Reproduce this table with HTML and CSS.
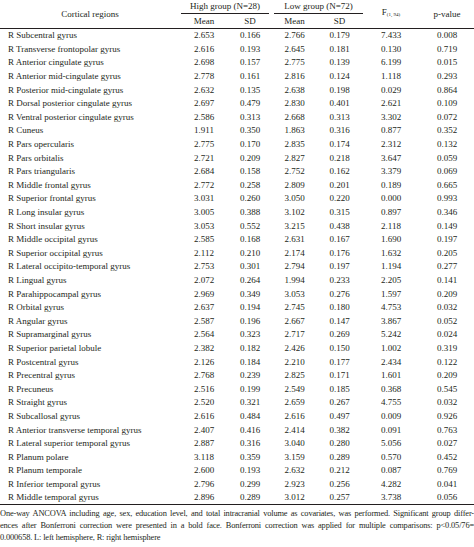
FILE: index.html
```html
<!DOCTYPE html>
<html>
<head>
<meta charset="utf-8">
<link rel="stylesheet" href="styles.css">
</head>
<body>
<div class="page">
<table class="stats">
<colgroup>
<col class="c-region"><col class="c-m1"><col class="c-s1"><col class="c-m2"><col class="c-s2"><col class="c-f"><col class="c-p">
</colgroup>
<thead>
<tr class="h1">
<th rowspan="2" class="region-h">Cortical regions</th>
<th colspan="2" class="grp"><span class="grp-label g1">High group (N=28)</span></th>
<th colspan="2" class="grp"><span class="grp-label g2">Low group (N=72)</span></th>
<th rowspan="2">F<sub>(1, 94)</sub></th>
<th rowspan="2">p-value</th>
</tr>
<tr class="h2">
<th>Mean</th><th>SD</th><th>Mean</th><th>SD</th>
</tr>
</thead>
<tbody>
<tr><td>R Subcentral gyrus</td><td>2.653</td><td>0.166</td><td>2.766</td><td>0.179</td><td>7.433</td><td>0.008</td></tr>
<tr><td>R Transverse frontopolar gyrus</td><td>2.616</td><td>0.193</td><td>2.645</td><td>0.181</td><td>0.130</td><td>0.719</td></tr>
<tr><td>R Anterior cingulate gyrus</td><td>2.698</td><td>0.157</td><td>2.775</td><td>0.139</td><td>6.199</td><td>0.015</td></tr>
<tr><td>R Anterior mid-cingulate gyrus</td><td>2.778</td><td>0.161</td><td>2.816</td><td>0.124</td><td>1.118</td><td>0.293</td></tr>
<tr><td>R Posterior mid-cingulate gyrus</td><td>2.632</td><td>0.135</td><td>2.638</td><td>0.198</td><td>0.029</td><td>0.864</td></tr>
<tr><td>R Dorsal posterior cingulate gyrus</td><td>2.697</td><td>0.479</td><td>2.830</td><td>0.401</td><td>2.621</td><td>0.109</td></tr>
<tr><td>R Ventral posterior cingulate gyrus</td><td>2.586</td><td>0.313</td><td>2.668</td><td>0.313</td><td>3.302</td><td>0.072</td></tr>
<tr><td>R Cuneus</td><td>1.911</td><td>0.350</td><td>1.863</td><td>0.316</td><td>0.877</td><td>0.352</td></tr>
<tr><td>R Pars opercularis</td><td>2.775</td><td>0.170</td><td>2.835</td><td>0.174</td><td>2.312</td><td>0.132</td></tr>
<tr><td>R Pars orbitalis</td><td>2.721</td><td>0.209</td><td>2.827</td><td>0.218</td><td>3.647</td><td>0.059</td></tr>
<tr><td>R Pars triangularis</td><td>2.684</td><td>0.158</td><td>2.752</td><td>0.162</td><td>3.379</td><td>0.069</td></tr>
<tr><td>R Middle frontal gyrus</td><td>2.772</td><td>0.258</td><td>2.809</td><td>0.201</td><td>0.189</td><td>0.665</td></tr>
<tr><td>R Superior frontal gyrus</td><td>3.031</td><td>0.260</td><td>3.050</td><td>0.220</td><td>0.000</td><td>0.993</td></tr>
<tr><td>R Long insular gyrus</td><td>3.005</td><td>0.388</td><td>3.102</td><td>0.315</td><td>0.897</td><td>0.346</td></tr>
<tr><td>R Short insular gyrus</td><td>3.053</td><td>0.552</td><td>3.215</td><td>0.438</td><td>2.118</td><td>0.149</td></tr>
<tr><td>R Middle occipital gyrus</td><td>2.585</td><td>0.168</td><td>2.631</td><td>0.167</td><td>1.690</td><td>0.197</td></tr>
<tr><td>R Superior occipital gyrus</td><td>2.112</td><td>0.210</td><td>2.174</td><td>0.176</td><td>1.632</td><td>0.205</td></tr>
<tr><td>R Lateral occipito-temporal gyrus</td><td>2.753</td><td>0.301</td><td>2.794</td><td>0.197</td><td>1.194</td><td>0.277</td></tr>
<tr><td>R Lingual gyrus</td><td>2.072</td><td>0.264</td><td>1.994</td><td>0.233</td><td>2.205</td><td>0.141</td></tr>
<tr><td>R Parahippocampal gyrus</td><td>2.969</td><td>0.349</td><td>3.053</td><td>0.276</td><td>1.597</td><td>0.209</td></tr>
<tr><td>R Orbital gyrus</td><td>2.637</td><td>0.194</td><td>2.745</td><td>0.180</td><td>4.753</td><td>0.032</td></tr>
<tr><td>R Angular gyrus</td><td>2.587</td><td>0.196</td><td>2.667</td><td>0.147</td><td>3.867</td><td>0.052</td></tr>
<tr><td>R Supramarginal gyrus</td><td>2.564</td><td>0.323</td><td>2.717</td><td>0.269</td><td>5.242</td><td>0.024</td></tr>
<tr><td>R Superior parietal lobule</td><td>2.382</td><td>0.182</td><td>2.426</td><td>0.150</td><td>1.002</td><td>0.319</td></tr>
<tr><td>R Postcentral gyrus</td><td>2.126</td><td>0.184</td><td>2.210</td><td>0.177</td><td>2.434</td><td>0.122</td></tr>
<tr><td>R Precentral gyrus</td><td>2.768</td><td>0.239</td><td>2.825</td><td>0.171</td><td>1.601</td><td>0.209</td></tr>
<tr><td>R Precuneus</td><td>2.516</td><td>0.199</td><td>2.549</td><td>0.185</td><td>0.368</td><td>0.545</td></tr>
<tr><td>R Straight gyrus</td><td>2.520</td><td>0.321</td><td>2.659</td><td>0.267</td><td>4.755</td><td>0.032</td></tr>
<tr><td>R Subcallosal gyrus</td><td>2.616</td><td>0.484</td><td>2.616</td><td>0.497</td><td>0.009</td><td>0.926</td></tr>
<tr><td>R Anterior transverse temporal gyrus</td><td>2.407</td><td>0.416</td><td>2.414</td><td>0.382</td><td>0.091</td><td>0.763</td></tr>
<tr><td>R Lateral superior temporal gyrus</td><td>2.887</td><td>0.316</td><td>3.040</td><td>0.280</td><td>5.056</td><td>0.027</td></tr>
<tr><td>R Planum polare</td><td>3.118</td><td>0.359</td><td>3.159</td><td>0.289</td><td>0.570</td><td>0.452</td></tr>
<tr><td>R Planum temporale</td><td>2.600</td><td>0.193</td><td>2.632</td><td>0.212</td><td>0.087</td><td>0.769</td></tr>
<tr><td>R Inferior temporal gyrus</td><td>2.796</td><td>0.299</td><td>2.923</td><td>0.256</td><td>4.282</td><td>0.041</td></tr>
<tr class="last"><td>R Middle temporal gyrus</td><td>2.896</td><td>0.289</td><td>3.012</td><td>0.257</td><td>3.738</td><td>0.056</td></tr>
</tbody>
</table>
<div class="note">
<p class="jl">One-way ANCOVA including age, sex, education level, and total intracranial volume as covariates, was performed. Significant group differ-</p>
<p class="jl">ences after Bonferroni correction were presented in a bold face. Bonferroni correction was applied for multiple comparisons: p&lt;0.05/76=</p>
<p>0.000658. L: left hemisphere, R: right hemisphere</p>
</div>
</div>
</body>
</html>
```

FILE: styles.css
```css
html, body {
  margin: 0;
  padding: 0;
  background: #ffffff;
}
.page {
  width: 474px;
  font-family: "Liberation Serif", "Times New Roman", serif;
  color: #231f20;
  font-size: 9px;
}
.stats {
  width: 474px;
  border-collapse: collapse;
  table-layout: fixed;
}
.c-region { width: 180px; }
.c-m1 { width: 48px; }
.c-s1 { width: 44px; }
.c-m2 { width: 45px; }
.c-s2 { width: 45px; }
.c-f { width: 58px; }
.c-p { width: 54px; }
.stats th {
  font-weight: normal;
  text-align: center;
  padding: 0;
  height: 13.5px;
  line-height: 12px;
  vertical-align: middle;
}
.stats thead tr.h2 th {
  border-bottom: 0.8px solid #231f20;
}
.stats thead th[rowspan] {
  border-bottom: 0.8px solid #231f20;
}
.grp {
  vertical-align: bottom;
}
.grp-label {
  display: block;
  border-bottom: 0.8px solid #231f20;
  padding-bottom: 1px;
}
.g1 { margin: 0 3px 0 1px; }
.g2 { margin: 0 -1px 0 2px; }
.stats sub {
  font-size: 5px;
  vertical-align: -1px;
}
.stats td {
  padding: 0;
  height: 13.6px;
  line-height: 12px;
  text-align: center;
  white-space: nowrap;
}
.stats td:first-child {
  text-align: left;
  padding-left: 8px;
}
.stats tr.last td {
  border-bottom: 0.8px solid #231f20;
}
.note {
  margin-top: 3px;
  font-size: 8.4px;
  letter-spacing: -0.15px;
}
.note p {
  margin: 0;
  line-height: 12px;
  text-align: justify;
  white-space: nowrap;
}
.note p.jl {
  text-align-last: justify;
}
```
